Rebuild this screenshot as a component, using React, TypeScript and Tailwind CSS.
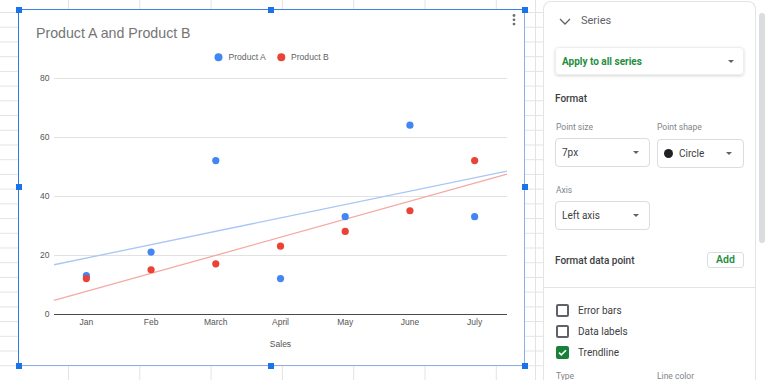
import React from 'react';

const months = ['Jan', 'Feb', 'March', 'April', 'May', 'June', 'July'];
const productA = [13, 21, 52, 12, 33, 64, 33];
const productB = [12, 15, 17, 23, 28, 35, 52];
const ticks = [0, 20, 40, 60, 80];

// plot area in page pixels
const PLOT_LEFT = 54;
const PLOT_RIGHT = 507;
const Y0 = 314;
const UNIT = 2.95;
const STEP = (PLOT_RIGHT - PLOT_LEFT) / 7;

const xAt = (i: number) => PLOT_LEFT + STEP * (i + 0.5);
const yAt = (v: number) => Y0 - v * UNIT;

// least squares line, returned as its ends at the plot edges
function trend(values: number[]) {
  const n = values.length;
  const mx = (n - 1) / 2;
  const my = values.reduce((a, b) => a + b, 0) / n;
  let sxy = 0;
  let sxx = 0;
  values.forEach((v, i) => {
    sxy += (i - mx) * (v - my);
    sxx += (i - mx) * (i - mx);
  });
  const slope = sxy / sxx;
  const at = (i: number) => my + slope * (i - mx);
  return { y1: yAt(at(-0.5)), y2: yAt(at(n - 0.5)) };
}

function Chart() {
  const ta = trend(productA);
  const tb = trend(productB);
  return (
    <svg width="505" height="355" viewBox="19 10 505 355" className="block" fontFamily="'Liberation Sans', Arial, sans-serif">
      <text x="36" y="38" fontSize="14.2" fill="#757575">Product A and Product B</text>

      <circle cx="514" cy="15.5" r="1.4" fill="#6f6f6f" />
      <circle cx="514" cy="19.8" r="1.4" fill="#6f6f6f" />
      <circle cx="514" cy="24.1" r="1.4" fill="#6f6f6f" />

      {/* legend */}
      <circle cx="218.5" cy="57.3" r="4" fill="#4285f4" />
      <text x="228.5" y="60.4" fontSize="8.6" fill="#5f5f5f">Product A</text>
      <circle cx="281.3" cy="57.3" r="4" fill="#ea4335" />
      <text x="291" y="60.4" fontSize="8.6" fill="#5f5f5f">Product B</text>

      {/* grid */}
      {ticks.map((t) => (
        <g key={t}>
          <line
            x1={PLOT_LEFT}
            x2={PLOT_RIGHT}
            y1={yAt(t) + 0.5}
            y2={yAt(t) + 0.5}
            stroke={t === 0 ? '#4a4a4a' : '#e2e2e2'}
            strokeWidth="1"
          />
          <text x="49.5" y={yAt(t) + 3} fontSize="8.5" fill="#555" textAnchor="end">{t}</text>
        </g>
      ))}

      {months.map((m, i) => (
        <text key={m} x={xAt(i)} y="325" fontSize="8.5" fill="#555" textAnchor="middle">{m}</text>
      ))}
      <text x={xAt(3)} y="347" fontSize="8.5" fill="#555" textAnchor="middle">Sales</text>

      {/* trendlines */}
      <line x1={PLOT_LEFT} x2={PLOT_RIGHT} y1={ta.y1} y2={ta.y2} stroke="#a9c6f7" strokeWidth="1.3" />
      <line x1={PLOT_LEFT} x2={PLOT_RIGHT} y1={tb.y1} y2={tb.y2} stroke="#f4aaa4" strokeWidth="1.3" />

      {productA.map((v, i) => (
        <circle key={'a' + i} cx={xAt(i)} cy={yAt(v)} r="3.6" fill="#4285f4" />
      ))}
      {productB.map((v, i) => (
        <circle key={'b' + i} cx={xAt(i)} cy={yAt(v)} r="3.6" fill="#ea4335" />
      ))}
    </svg>
  );
}

function Caret() {
  return (
    <svg width="6" height="3" viewBox="0 0 6 3" className="shrink-0">
      <path d="M0 0h6L3 3z" fill="#5f6368" />
    </svg>
  );
}

function Checkbox({ checked, label }: { checked?: boolean; label: string }) {
  return (
    <div className="flex h-[13px] items-center gap-[9px] pl-[1px]">
      {checked ? (
        <div className="flex h-[13px] w-[13px] items-center justify-center rounded-[2px] bg-[#188038]">
          <svg width="9" height="7" viewBox="0 0 9 7">
            <path d="M1 3.6l2.3 2.2L8 1.2" stroke="#fff" strokeWidth="1.6" fill="none" />
          </svg>
        </div>
      ) : (
        <div className="h-[13px] w-[13px] rounded-[2px] border-2 border-[#5f6368]" />
      )}
      <span className="text-[10px] leading-[13px] text-[#3c4043]">{label}</span>
    </div>
  );
}

function Handle({ className }: { className: string }) {
  return <div className={`absolute h-[6px] w-[6px] bg-[#1a73e8] ${className}`} />;
}

export default function App() {
  return (
    <div className="flex h-[380px] w-[768px] overflow-hidden bg-white font-['Roboto',sans-serif]">
      {/* sheet with the chart on top */}
      <div className="h-full w-[543px] shrink-0 pt-[9px] pl-[18px] [background-image:linear-gradient(to_bottom,#e3e3e3_1px,transparent_1px),linear-gradient(to_right,#e3e3e3_1px,transparent_1px),linear-gradient(to_right,transparent_535px,#e3e3e3_535px,#e3e3e3_536px,transparent_536px)] [background-size:100%_14.72px,71.3px_100%,100%_100%] [background-position:0_12px,68px_0,0_0]">
        <div className="relative h-[357px] w-[507px] border border-t-[#3d80ea] border-l-[#2f78e8] border-r-[#8eaee6] border-b-[#8eaee6] bg-white">
          <Chart />
          <Handle className="-left-[3.5px] -top-[3.5px]" />
          <Handle className="left-[249px] -top-[3.5px]" />
          <Handle className="-right-[3.5px] -top-[3.5px]" />
          <Handle className="-left-[3.5px] top-[174px]" />
          <Handle className="-right-[3.5px] top-[174px]" />
          <Handle className="-left-[3.5px] -bottom-[3.5px]" />
          <Handle className="left-[249px] -bottom-[3.5px]" />
          <Handle className="-right-[3.5px] -bottom-[3.5px]" />
        </div>
      </div>

      {/* chart editor */}
      <div className="flex h-full flex-1">
        <div className="mt-[1px] h-[400px] w-[213px] shrink-0 rounded-t-[8px] border border-b-0 border-[#e3e4e6] bg-white">
          <div className="px-[11px]">
            <div className="flex h-[38px] items-center gap-[10px] pl-[4px]">
              <svg width="12" height="7" viewBox="0 0 12 7">
                <path d="M1 1l5 5 5-5" stroke="#5f6368" strokeWidth="1.3" fill="none" />
              </svg>
              <span className="text-[11px] text-[#5f6368]">Series</span>
            </div>

            <div className="mt-[7px] flex h-[28px] items-center justify-between rounded-[4px] border border-[#eceef0] pl-[6px] pr-[9px] shadow-[0_1px_3px_rgba(60,64,67,0.22)]">
              <span className="text-[10px] font-bold text-[#1e8e3e]">Apply to all series</span>
              <Caret />
            </div>

            <div className="mt-[17px] text-[10px] font-medium leading-[14px] text-[#3c4043]">Format</div>

            <div className="mt-[15px] flex gap-[7px]">
              <div className="w-[95px]">
                <div className="pl-[1px] text-[8.5px] leading-[12px] text-[#80868b]">Point size</div>
                <div className="mt-[5px] flex h-[29px] items-center justify-between rounded-[4px] border border-[#dadce0] pl-[6px] pr-[10px]">
                  <span className="text-[10px] text-[#3c4043]">7px</span>
                  <Caret />
                </div>
              </div>
              <div className="w-[87px]">
                <div className="text-[8.5px] leading-[12px] text-[#80868b]">Point shape</div>
                <div className="mt-[6px] flex h-[29px] items-center justify-between rounded-[4px] border border-[#dadce0] pl-[6px] pr-[11px]">
                  <div className="flex items-center gap-[6px]">
                    <div className="h-[9px] w-[9px] rounded-full bg-[#202124]" />
                    <span className="text-[10px] text-[#3c4043]">Circle</span>
                  </div>
                  <Caret />
                </div>
              </div>
            </div>

            <div className="mt-[16px] pl-[1px] text-[8.5px] leading-[12px] text-[#80868b]">Axis</div>
            <div className="mt-[5px] flex h-[29px] w-[95px] items-center justify-between rounded-[4px] border border-[#dadce0] pl-[6px] pr-[10px]">
              <span className="text-[10px] text-[#3c4043]">Left axis</span>
              <Caret />
            </div>

            <div className="mt-[22px] flex h-[16px] items-center justify-between">
              <span className="text-[10px] font-medium text-[#3c4043]">Format data point</span>
              <div className="flex h-[16px] w-[37px] items-center justify-center rounded-[3px] border border-[#dadce0] text-[10.5px] font-semibold text-[#1e8e3e]">
                Add
              </div>
            </div>
          </div>

          <div className="mt-[19px] border-t border-[#e3e4e6]" />

          <div className="flex flex-col gap-[8px] px-[11px] pt-[16px]">
            <Checkbox label="Error bars" />
            <Checkbox label="Data labels" />
            <Checkbox checked label="Trendline" />
          </div>

          <div className="mt-[11px] flex gap-[7px] px-[11px] text-[8.5px] leading-[12px] text-[#80868b]">
            <span className="w-[95px] pl-[1px]">Type</span>
            <span>Line color</span>
          </div>
        </div>

        <div className="ml-[3px] mt-[13px] h-[230px] w-[6px] rounded-full bg-[#dadce0]" />
      </div>
    </div>
  );
}
